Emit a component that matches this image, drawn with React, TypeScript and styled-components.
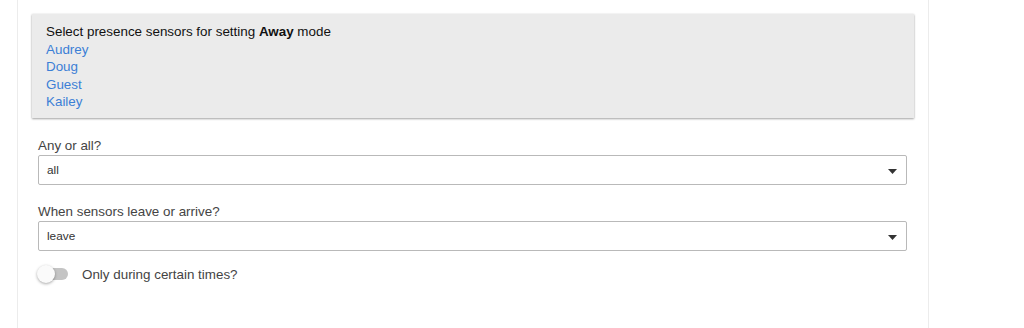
import React from "react";
import styled, { createGlobalStyle } from "styled-components";

const Global = createGlobalStyle`
  html, body { margin: 0; padding: 0; background: #fff; }
  body { font-family: "Liberation Sans", Arial, sans-serif; }
`;

const Page = styled.div`
  height: 328px;
  padding-left: 17px;
  box-sizing: border-box;
`;

const Card = styled.div`
  width: 912px;
  height: 328px;
  box-sizing: border-box;
  border-left: 1px solid #ececec;
  border-right: 1px solid #ececec;
  padding: 14px 14px 0 14px;
`;

const SensorBox = styled.div`
  background: #ebebeb;
  box-shadow: 0 1px 2px rgba(0, 0, 0, 0.35), 0 0 2px rgba(0, 0, 0, 0.08);
  padding: 9px 14px 8px 14px;
  font-size: 13.4px;
  line-height: 17.6px;
  color: #111;
  height: 104px;
  box-sizing: border-box;
`;

const SensorLink = styled.div`
  color: #3b7fd6;
`;

const Fields = styled.div`
  padding: 0 7px 0 6px;
  display: flex;
  flex-direction: column;
`;

const Field = styled.div<{ $top: number }>`
  margin-top: ${(p) => p.$top}px;
  display: flex;
  flex-direction: column;
`;

const Label = styled.div`
  font-size: 13.4px;
  line-height: 17px;
  color: #444;
  margin-bottom: 1px;
`;

const Select = styled.div`
  height: 30px;
  box-sizing: border-box;
  border: 1px solid #b9b9b9;
  border-radius: 2px;
  display: flex;
  align-items: center;
  justify-content: space-between;
  padding: 0 9px 0 8px;
  font-size: 11.8px;
  color: #333;
  background: #fff;
`;

const Arrow = styled.svg`
  width: 9px;
  height: 5px;
  margin-top: 2px;
`;

const ToggleRow = styled.div`
  margin-top: 13px;
  display: flex;
  align-items: center;
  gap: 14px;
  height: 20px;
`;

const Switch = styled.div`
  position: relative;
  width: 30px;
  height: 20px;
  display: flex;
  align-items: center;
  justify-content: flex-end;
`;

const Track = styled.div`
  width: 26px;
  height: 12px;
  border-radius: 6px;
  background: #c4c4c4;
`;

const Knob = styled.div`
  position: absolute;
  left: -1px;
  top: 1px;
  width: 18px;
  height: 18px;
  border-radius: 50%;
  background: #fafafa;
  box-shadow: 0 1px 3px rgba(0, 0, 0, 0.35);
`;

const ToggleLabel = styled.div`
  font-size: 13.4px;
  color: #444;
`;

const Caret = () => (
  <Arrow viewBox="0 0 9 5">
    <path d="M0 0 H9 L4.5 5 Z" fill="#333" />
  </Arrow>
);

export default function App() {
  return (
    <>
      <Global />
      <Page>
        <Card>
          <SensorBox>
            <div>
              Select presence sensors for setting <b>Away</b> mode
            </div>
            {["Audrey", "Doug", "Guest", "Kailey"].map((n) => (
              <SensorLink key={n}>{n}</SensorLink>
            ))}
          </SensorBox>
          <Fields>
            <Field $top={19}>
              <Label>Any or all?</Label>
              <Select>
                <span>all</span>
                <Caret />
              </Select>
            </Field>
            <Field $top={18}>
              <Label>When sensors leave or arrive?</Label>
              <Select>
                <span>leave</span>
                <Caret />
              </Select>
            </Field>
            <ToggleRow>
              <Switch>
                <Track />
                <Knob />
              </Switch>
              <ToggleLabel>Only during certain times?</ToggleLabel>
            </ToggleRow>
          </Fields>
        </Card>
      </Page>
    </>
  );
}
